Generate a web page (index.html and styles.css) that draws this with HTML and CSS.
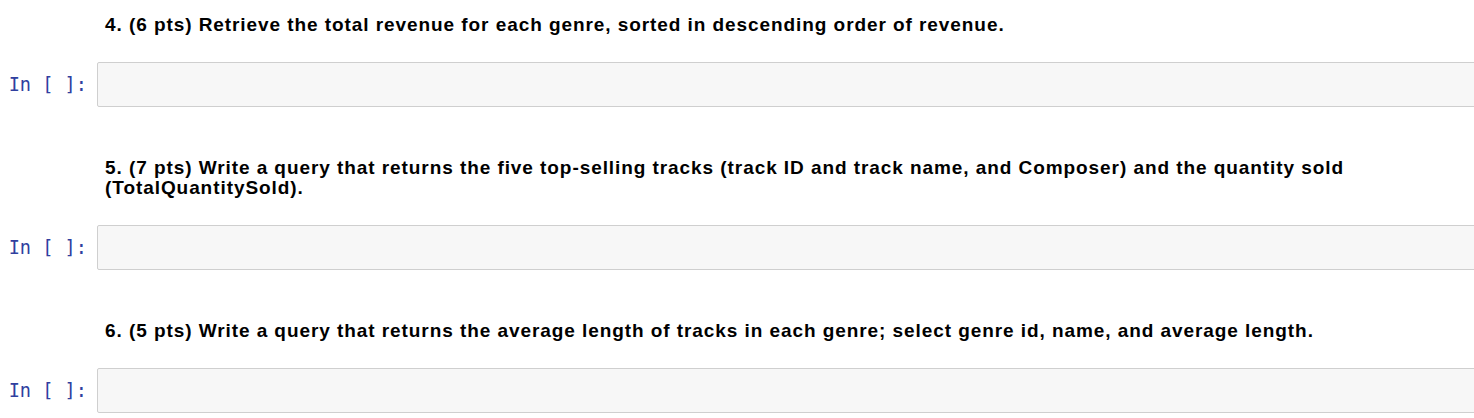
FILE: index.html
```html
<!DOCTYPE html>
<html>
<head>
<meta charset="utf-8">
<link rel="stylesheet" href="styles.css">
</head>
<body>
<div class="notebook">
  <div class="row md-row">
    <div class="prompt"></div>
    <h4 class="md">4. (6 pts) Retrieve the total revenue for each genre, sorted in descending order of revenue.</h4>
  </div>
  <div class="row code-row">
    <div class="prompt in">In&nbsp;[&nbsp;]:</div>
    <div class="input-box"></div>
  </div>
  <div class="row md-row">
    <div class="prompt"></div>
    <h4 class="md">5. (7 pts) Write a query that returns the five top-selling tracks (track ID and track name, and Composer) and the quantity sold<br>(TotalQuantitySold).</h4>
  </div>
  <div class="row code-row">
    <div class="prompt in">In&nbsp;[&nbsp;]:</div>
    <div class="input-box"></div>
  </div>
  <div class="row md-row">
    <div class="prompt"></div>
    <h4 class="md">6. (5 pts) Write a query that returns the average length of tracks in each genre; select genre id, name, and average length.</h4>
  </div>
  <div class="row code-row">
    <div class="prompt in">In&nbsp;[&nbsp;]:</div>
    <div class="input-box"></div>
  </div>
</div>
</body>
</html>
```
FILE: styles.css
```css
html, body {
  margin: 0;
  padding: 0;
  background: #fff;
  overflow: hidden;
}
.notebook {
  padding-top: 15px;
  width: 1474px;
  overflow: hidden;
}
.row {
  display: flex;
  align-items: flex-start;
}
.prompt {
  flex: 0 0 97px;
  width: 97px;
  box-sizing: border-box;
}
.md-row {
  margin-bottom: 27px;
}
.code-row {
  margin-bottom: 51px;
}
.code-row:last-child {
  margin-bottom: 0;
}
.md {
  margin: 0;
  padding-left: 8px;
  font-family: "Liberation Sans", Arial, sans-serif;
  font-weight: bold;
  font-size: 19px;
  letter-spacing: 0.93px;
  line-height: 20px;
  color: #000;
  white-space: nowrap;
}
.prompt.in {
  font-family: "DejaVu Sans Mono", monospace;
  font-size: 18.6px;
  line-height: 45px;
  height: 45px;
  color: #303F9F;
  text-align: right;
  padding-right: 10px;
  white-space: nowrap;
}
.input-box {
  flex: 0 0 1400px;
  height: 45px;
  box-sizing: border-box;
  background: #f7f7f7;
  border: 1px solid #cfcfcf;
  border-radius: 2px;
}
```
